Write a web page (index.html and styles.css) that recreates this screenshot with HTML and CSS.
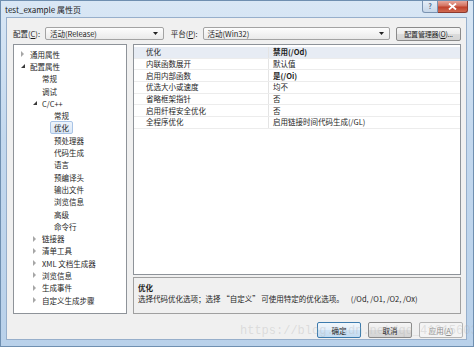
FILE: index.html
```html
<!DOCTYPE html>
<html lang="zh-CN">
<head>
    <meta charset="UTF-8">
    <title>test_example 属性页</title>
    <link rel="stylesheet" href="styles.css">
</head>
<body>
    <div class="window">
        <div class="titlebar">
            <span class="title">test_example 属性页</span>
            <div class="caption-btns">
                <span class="cap-help">?</span>
                <span class="cap-close">
                    <svg width="9" height="7" viewBox="0 0 9 7">
                        <path d="M1 0.5 L8 6.5 M8 0.5 L1 6.5" stroke="#fff" stroke-width="1.8"/>
                    </svg>
                </span>
            </div>
        </div>

        <div class="client">
            <div class="config-row">
                <span class="label">配置(<u>C</u>):</span>
                <div class="combo combo-config">
                    <span>活动(Release)</span>
                    <svg width="5" height="3" viewBox="0 0 5 3"><path d="M0 0H5L2.5 3z" fill="#222"/></svg>
                </div>
                <span class="label label-platform">平台(<u>P</u>):</span>
                <div class="combo combo-platform">
                    <span>活动(Win32)</span>
                    <svg width="5" height="3" viewBox="0 0 5 3"><path d="M0 0H5L2.5 3z" fill="#222"/></svg>
                </div>
                <div class="btn btn-manager">配置管理器(<u>O</u>)...</div>
            </div>

            <div class="main">
                <div class="tree">
                    <div class="tree-row lv0"><span class="arrow closed"></span><span class="text">通用属性</span></div>
                    <div class="tree-row lv0"><span class="arrow open"></span><span class="text">配置属性</span></div>
                    <div class="tree-row lv1"><span class="arrow"></span><span class="text">常规</span></div>
                    <div class="tree-row lv1"><span class="arrow"></span><span class="text">调试</span></div>
                    <div class="tree-row lv1"><span class="arrow open"></span><span class="text">C/C++</span></div>
                    <div class="tree-row lv2"><span class="arrow"></span><span class="text">常规</span></div>
                    <div class="tree-row lv2"><span class="arrow"></span><span class="text selected">优化</span></div>
                    <div class="tree-row lv2"><span class="arrow"></span><span class="text">预处理器</span></div>
                    <div class="tree-row lv2"><span class="arrow"></span><span class="text">代码生成</span></div>
                    <div class="tree-row lv2"><span class="arrow"></span><span class="text">语言</span></div>
                    <div class="tree-row lv2"><span class="arrow"></span><span class="text">预编译头</span></div>
                    <div class="tree-row lv2"><span class="arrow"></span><span class="text">输出文件</span></div>
                    <div class="tree-row lv2"><span class="arrow"></span><span class="text">浏览信息</span></div>
                    <div class="tree-row lv2"><span class="arrow"></span><span class="text">高级</span></div>
                    <div class="tree-row lv2"><span class="arrow"></span><span class="text">命令行</span></div>
                    <div class="tree-row lv1"><span class="arrow closed"></span><span class="text">链接器</span></div>
                    <div class="tree-row lv1"><span class="arrow closed"></span><span class="text">清单工具</span></div>
                    <div class="tree-row lv1"><span class="arrow closed"></span><span class="text">XML 文档生成器</span></div>
                    <div class="tree-row lv1"><span class="arrow closed"></span><span class="text">浏览信息</span></div>
                    <div class="tree-row lv1"><span class="arrow closed"></span><span class="text">生成事件</span></div>
                    <div class="tree-row lv1"><span class="arrow closed"></span><span class="text">自定义生成步骤</span></div>
                </div>

                <div class="right">
                    <div class="grid">
                        <div class="grid-row active"><span class="name">优化</span><span class="value bold">禁用(/Od)</span></div>
                        <div class="grid-row"><span class="name">内联函数展开</span><span class="value">默认值</span></div>
                        <div class="grid-row"><span class="name">启用内部函数</span><span class="value bold">是(/Oi)</span></div>
                        <div class="grid-row"><span class="name">优选大小或速度</span><span class="value">均不</span></div>
                        <div class="grid-row"><span class="name">省略框架指针</span><span class="value">否</span></div>
                        <div class="grid-row"><span class="name">启用纤程安全优化</span><span class="value">否</span></div>
                        <div class="grid-row"><span class="name">全程序优化</span><span class="value">启用链接时间代码生成(/GL)</span></div>
                    </div>
                    <div class="desc">
                        <div class="desc-title">优化</div>
                        <div class="desc-text">选择代码优化选项；选择 “自定义” 可使用特定的优化选项。<span class="desc-opts">(/Od, /O1, /O2, /Ox)</span></div>
                    </div>
                </div>
            </div>

            <div class="buttons">
                <div class="btn btn-dlg btn-default">确定</div>
                <div class="btn btn-dlg">取消</div>
                <div class="btn btn-dlg disabled">应用(<u>A</u>)</div>
            </div>

            <div class="watermark">https://blog.csdn.net/qq_41315603</div>
        </div>
    </div>
</body>
</html>
```

FILE: styles.css
```css
* {
    margin: 0;
    padding: 0;
    box-sizing: border-box;
}

body {
    font-family: "Noto Sans CJK SC", "Liberation Sans", sans-serif;
    font-size: 7.5px;
    color: #1e1e1e;
    background: #ffffff;
}

.window {
    width: 474px;
    height: 347px;
    display: flex;
    flex-direction: column;
    background: linear-gradient(180deg, #d9e7f5 0%, #c3d8ee 40%, #b9d1ea 100%);
    border: 1px solid #6f8fb0;
    overflow: hidden;
}

.titlebar {
    height: 16px;
    display: flex;
    align-items: flex-start;
    padding-left: 4px;
}

.title {
    font-size: 8px;
    line-height: 14px;
    color: #1b1b1b;
    margin-top: 2px;
}

.caption-btns {
    margin-left: auto;
    margin-right: 5px;
    display: flex;
}

.cap-help {
    width: 16px;
    height: 12px;
    border: 1px solid #7a93b1;
    border-top: none;
    border-radius: 0 0 0 3px;
    background: linear-gradient(180deg, #e6eef7, #c6d6e8);
    color: #4d6787;
    font-size: 7px;
    line-height: 11px;
    text-align: center;
    font-weight: bold;
}

.cap-close {
    width: 30px;
    height: 12px;
    border: 1px solid #8c3a30;
    border-top: none;
    border-left: none;
    border-radius: 0 0 3px 0;
    background: linear-gradient(180deg, #e8a89d 0%, #d2705e 45%, #c0402b 55%, #d06a52 100%);
    display: flex;
    align-items: center;
    justify-content: center;
}

.client {
    position: relative;
    flex: 1;
    margin: 0 6px 6px 5px;
    background: #f0f0f0;
    border: 1px solid #97afcb;
    padding: 9px 3px 1px 6px;
    display: flex;
    flex-direction: column;
}

.config-row {
    height: 13px;
    display: flex;
    align-items: center;
    margin-right: 2px;
}

.label {
    width: 32px;
    line-height: 13px;
}

.label-platform {
    margin-left: 7px;
}

.combo {
    height: 13px;
    display: flex;
    align-items: center;
    justify-content: space-between;
    padding: 0 5px 0 4px;
    border: 1px solid #a3a3a3;
    border-radius: 2px;
    background: linear-gradient(180deg, #fdfdfd, #eaeaea);
    line-height: 11px;
}

.combo-config {
    width: 119px;
}

.combo-platform {
    width: 188px;
}

.btn {
    display: flex;
    align-items: center;
    justify-content: center;
    border: 1px solid #8a8a8a;
    border-radius: 2px;
    background: linear-gradient(180deg, #f6f6f6 0%, #ebebeb 50%, #dcdcdc 51%, #d4d4d4 100%);
    white-space: nowrap;
}

.btn-manager {
    width: 65px;
    height: 14px;
    margin-left: 6px;
    font-size: 7px;
    letter-spacing: -0.2px;
}

.main {
    height: 270px;
    margin-top: 4px;
    margin-right: 2px;
    display: flex;
}

.tree {
    width: 114px;
    background: #ffffff;
    border: 1px solid #8e9399;
    padding-top: 3px;
}

.tree-row {
    height: 12.3px;
    display: flex;
    align-items: center;
    line-height: 11px;
}

.tree-row.lv0 { padding-left: 5px; }
.tree-row.lv1 { padding-left: 17px; }
.tree-row.lv2 { padding-left: 29px; }

.arrow {
    width: 7px;
    height: 7px;
    display: flex;
    align-items: center;
    justify-content: center;
}

.arrow.closed::before {
    content: "";
    border-left: 3px solid #a6a6a6;
    border-top: 3px solid transparent;
    border-bottom: 3px solid transparent;
}

.arrow.open::before {
    content: "";
    border-right: 4px solid #3a3a3a;
    border-top: 4px solid transparent;
}

.tree-row .text {
    padding: 0 3px;
    border: 1px solid transparent;
    border-radius: 2px;
}

.tree-row .text.selected {
    background: linear-gradient(180deg, #eef4fb, #d9e7f7);
    border-color: #a9c4e6;
}

.right {
    flex: 1;
    margin-left: 6px;
    display: flex;
    flex-direction: column;
}

.grid {
    height: 231px;
    background: #ffffff;
    border: 1px solid #8e9399;
    padding-top: 2px;
}

.grid-row {
    height: 11.7px;
    display: flex;
    align-items: center;
    border-bottom: 1px solid #ececec;
    line-height: 10px;
}

.grid-row.active {
    background: #e7ecf4;
}

.grid-row .name {
    width: 135px;
    padding-left: 12px;
    height: 100%;
    display: flex;
    align-items: center;
    border-right: 1px solid #e4e4e4;
}

.grid-row .value {
    padding-left: 4px;
}

.bold {
    font-weight: bold;
}

.desc {
    flex: 1;
    margin-top: 2px;
    border: 1px solid #a0a0a0;
    padding: 4px 4px;
    line-height: 11px;
}

.desc-title {
    font-weight: bold;
}

.desc-opts {
    margin-left: 7px;
}

.buttons {
    margin-top: 8px;
    height: 16px;
    display: flex;
    justify-content: flex-end;
    gap: 7px;
}

.btn-dlg {
    width: 44px;
    height: 16px;
}

.btn-default {
    border-color: #3d7bad;
    background: linear-gradient(180deg, #f1f7fc 0%, #e3eef9 50%, #cfe3f5 51%, #c3dbf0 100%);
}

.btn.disabled {
    color: #8d8d8d;
    border-color: #b4b4b4;
    background: #f4f4f4;
}

.watermark {
    position: absolute;
    left: 233px;
    top: 306px;
    font-family: "Liberation Mono", monospace;
    font-size: 12px;
    color: rgba(170, 170, 170, 0.3);
    white-space: nowrap;
    pointer-events: none;
}
```
